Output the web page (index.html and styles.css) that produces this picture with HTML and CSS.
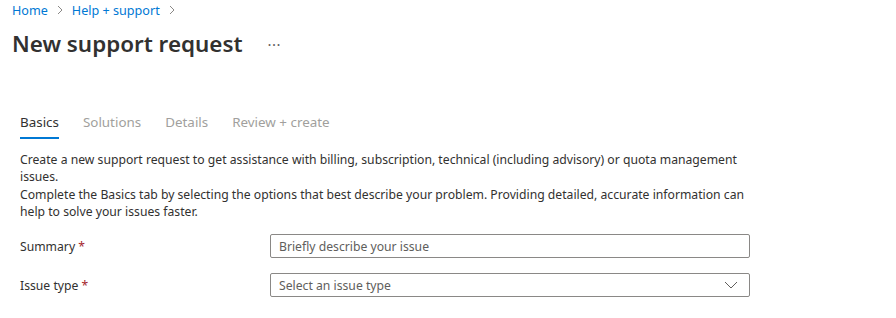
FILE: index.html
```html
<!DOCTYPE html>
<html lang="en">
<head>
<meta charset="utf-8">
<title>New support request</title>
<link rel="stylesheet" href="styles.css">
</head>
<body>
<nav class="breadcrumb">
  <a class="crumb" href="#">Home</a>
  <svg class="sep" width="6" height="10" viewBox="0 0 6 10"><polyline points="1,1 5,5 1,9" fill="none" stroke="#8a8886" stroke-width="1"/></svg>
  <a class="crumb" href="#">Help + support</a>
  <svg class="sep" width="6" height="10" viewBox="0 0 6 10"><polyline points="1,1 5,5 1,9" fill="none" stroke="#8a8886" stroke-width="1"/></svg>
</nav>
<header class="header">
  <h1 class="title">New support request</h1>
  <span class="more">···</span>
</header>
<div class="tabs">
  <span class="tab active">Basics</span>
  <span class="tab">Solutions</span>
  <span class="tab">Details</span>
  <span class="tab">Review + create</span>
</div>
<main class="content">
  <p class="desc">Create a new support request to get assistance with billing, subscription, technical (including advisory) or quota management issues.</p>
  <p class="desc second">Complete the Basics tab by selecting the options that best describe your problem. Providing detailed, accurate information can help to solve your issues faster.</p>
  <div class="form">
    <div class="row">
      <label class="label">Summary <span class="req">*</span></label>
      <div class="field"><span class="placeholder">Briefly describe your issue</span></div>
    </div>
    <div class="row">
      <label class="label">Issue type <span class="req">*</span></label>
      <div class="field select"><span class="placeholder">Select an issue type</span>
        <svg class="chev" width="14" height="8" viewBox="0 0 14 8"><polyline points="1,1 7,7 13,1" fill="none" stroke="#605e5c" stroke-width="1"/></svg>
      </div>
    </div>
  </div>
</main>
</body>
</html>
```
FILE: styles.css
```css
html, body {
  margin: 0;
  padding: 0;
  background: #ffffff;
}
body {
  font-family: "Noto Sans", "Open Sans", sans-serif;
  color: #323130;
  font-size: 12.2px;
}
.breadcrumb {
  display: flex;
  align-items: center;
  gap: 9px;
  height: 20px;
  padding: 0 12px;
  font-size: 12.6px;
}
.crumb {
  color: #0078d4;
  text-decoration: none;
}
.sep {
  display: block;
}
.header {
  display: flex;
  align-items: center;
  height: 32px;
  margin-top: 8px;
  padding: 0 12px;
}
.title {
  margin: 0;
  font-size: 22.4px;
  font-weight: 600;
  line-height: 32px;
  color: #323130;
}
.more {
  margin-left: 25px;
  color: #605e5c;
  font-size: 15px;
  letter-spacing: 0.5px;
  line-height: 32px;
}
.tabs {
  display: flex;
  gap: 24px;
  margin-top: 50px;
  padding: 0 20px;
}
.tab {
  font-size: 13.4px;
  line-height: 24px;
  padding-bottom: 3px;
  border-bottom: 2px solid transparent;
  color: #a19f9d;
}
.tab.active {
  color: #323130;
  border-bottom-color: #0078d4;
}
.content {
  padding: 0 20px;
  margin-top: 12px;
}
.desc {
  margin: 0;
  max-width: 730px;
  line-height: 17px;
}
.desc.second {
  margin-top: 1px;
}
.form {
  display: flex;
  flex-direction: column;
  gap: 15px;
  margin-top: 14px;
}
.row {
  display: flex;
  align-items: center;
}
.label {
  width: 250px;
  flex: none;
}
.req {
  color: #a4262c;
}
.field {
  box-sizing: border-box;
  width: 480px;
  height: 24px;
  border: 1px solid #8a8886;
  border-radius: 2px;
  display: flex;
  align-items: center;
  padding: 0 8px;
}
.placeholder {
  color: #605e5c;
}
.select {
  justify-content: space-between;
  padding-right: 11px;
}
.chev {
  display: block;
}
```
